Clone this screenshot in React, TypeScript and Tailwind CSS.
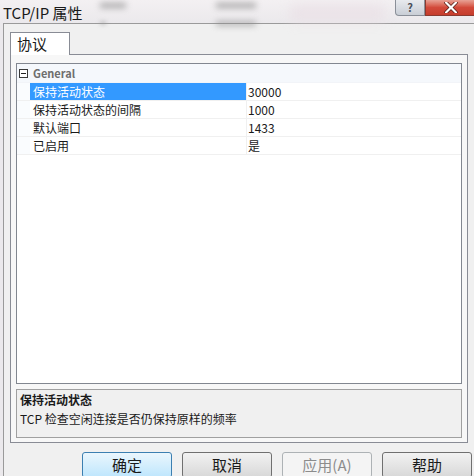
import React from "react";

const cjk = { fontFamily: '"Noto Sans CJK SC", "Noto Sans", sans-serif' };

type Row = { label: string; value: string; selected?: boolean };

const rows: Row[] = [
  { label: "保持活动状态", value: "30000", selected: true },
  { label: "保持活动状态的间隔", value: "1000" },
  { label: "默认端口", value: "1433" },
  { label: "已启用", value: "是" },
];

function CaptionButtons() {
  return (
    <div className="flex items-start">
      <div className="w-[30px] h-[16px] border border-[#8a8f98] border-t-0 rounded-bl-[4px] bg-gradient-to-b from-[#e8eaee] to-[#c9ced6] flex items-center justify-center">
        <span className="text-[11px] leading-none text-[#4a4f58] font-bold" style={cjk}>?</span>
      </div>
      <div className="w-[52px] h-[16px] border border-[#8a3a30] border-t-0 bg-gradient-to-b from-[#e7a195] via-[#d2493a] to-[#c53d2c] flex items-center justify-center">
        <svg width="14" height="11" viewBox="0 0 14 11">
          <path d="M2 0.5 L12 10.5 M12 0.5 L2 10.5" stroke="#4a1a14" strokeWidth="3.6" strokeLinecap="round" />
          <path d="M2 0.5 L12 10.5 M12 0.5 L2 10.5" stroke="#ffffff" strokeWidth="2.2" strokeLinecap="round" />
        </svg>
      </div>
    </div>
  );
}

function TitleBar() {
  return (
    <div className="relative h-[28px] bg-gradient-to-b from-[#f3f0f2] to-[#ebe9ec] flex items-start justify-between">
      {/* blurred shapes seen through the glass frame */}
      <div className="absolute left-[100px] top-[3px] w-[26px] h-[5px] bg-[#8a8a8a] blur-[3px] opacity-70" />
      <div className="absolute left-[216px] top-[3px] w-[40px] h-[5px] bg-[#8a8a8a] blur-[3px] opacity-70" />
      <div className="absolute left-[216px] top-[21px] w-[40px] h-[5px] bg-[#8a8a8a] blur-[3px] opacity-60" />
      <div className="absolute left-[100px] top-[21px] w-[6px] h-[4px] bg-[#9a9a9a] blur-[2px] opacity-50" />
      <div className="absolute left-[290px] top-[4px] w-[95px] h-[18px] bg-[#e9dde4] blur-[6px] opacity-60" />
      <div className="relative pl-[3px] pt-[3px] text-[15px] leading-[20px] text-[#1a1a1a] whitespace-nowrap" style={cjk}>
        TCP/IP 属性
      </div>
      <div className="relative -mr-[3px]">
        <CaptionButtons />
      </div>
    </div>
  );
}

function PropertyGrid() {
  return (
    <div className="h-[321px] border border-[#828790] bg-white flex flex-col text-[12px] leading-[17px]" style={cjk}>
      {/* category row */}
      <div className="flex h-[19px] bg-[#f5f8fc] border-b border-[#f2f4f8]">
        <div className="w-[13px] flex items-center justify-center">
          <div className="w-[9px] h-[9px] border border-[#3a3a3a] bg-white flex items-center justify-center">
            <div className="w-[5px] h-[1px] bg-[#222]" />
          </div>
        </div>
        <div className="pl-[3px] font-bold text-[#6e6e6e] text-[11px] leading-[19px]">General</div>
      </div>
      {rows.map((r) => (
        <div key={r.label} className="flex h-[18px] border-b border-[#f0f0f0]">
          <div className="w-[13px] bg-[#fafcfe]" />
          <div
            className={
              r.selected
                ? "w-[216px] bg-[#3399ff] text-white pl-[3px] leading-[17px]"
                : "w-[216px] text-[#1a1a1a] pl-[3px] leading-[17px]"
            }
          >
            {r.label}
          </div>
          <div className="flex-1 border-l border-[#f0f0f0] pl-[1px] text-[#1a1a1a] leading-[17px]">{r.value}</div>
        </div>
      ))}
      <div className="flex-1" />
    </div>
  );
}

function Description() {
  return (
    <div className="mt-[5px] h-[49px] border border-[#a0a0a0] bg-[#f0f0f0] px-[3px] pt-[1px] text-[12px] text-[#1a1a1a]" style={cjk}>
      <div className="font-bold leading-[17px]">保持活动状态</div>
      <div className="leading-[17px] mt-[2px]">TCP 检查空闲连接是否仍保持原样的频率</div>
    </div>
  );
}

function DialogButton({ label, kind }: { label: string; kind: "default" | "normal" | "disabled" }) {
  const cls =
    kind === "default"
      ? "border-[#3c7fb1] bg-gradient-to-b from-[#eaf6fd] to-[#bee6fd] text-[#1a1a1a]"
      : kind === "disabled"
      ? "border-[#adb2b5] bg-[#f4f4f4] text-[#8c8c8c]"
      : "border-[#707070] bg-gradient-to-b from-[#f2f2f2] to-[#d8d8d8] text-[#1a1a1a]";
  return (
    <div
      className={"w-[90px] h-[26px] rounded-[3px] border flex items-center justify-center text-[15px] leading-none pb-[2px] " + cls}
      style={cjk}
    >
      {label}
    </div>
  );
}

export default function App() {
  return (
    <div className="w-[474px] h-[476px] overflow-hidden bg-[#ebe9ec] flex flex-col">
      <TitleBar />
      <div className="flex-1 flex pl-[3px]">
        <div className="flex-1 border-l border-t border-[#9a9a9a] bg-[#f0f0f0] flex flex-col pl-[6px] pt-[8px]">
          {/* tab strip */}
          <div className="flex">
            <div className="w-[60px] h-[23px] border border-b-0 border-[#898c95] bg-white relative z-10 -mb-px">
              <div className="pl-[6px] pt-[1px] text-[15px] leading-[20px] text-[#1a1a1a]" style={cjk}>
                协议
              </div>
            </div>
          </div>
          {/* tab page */}
          <div className="w-[458px] h-[389px] border border-[#898c95] bg-[#f7f7f7] px-[5px] pt-[8px]">
            <PropertyGrid />
            <Description />
          </div>
          {/* dialog buttons */}
          <div className="flex pl-[72px] gap-[10px] pt-[9px]">
            <DialogButton label="确定" kind="default" />
            <DialogButton label="取消" kind="normal" />
            <DialogButton label="应用(A)" kind="disabled" />
            <DialogButton label="帮助" kind="normal" />
          </div>
        </div>
      </div>
    </div>
  );
}
